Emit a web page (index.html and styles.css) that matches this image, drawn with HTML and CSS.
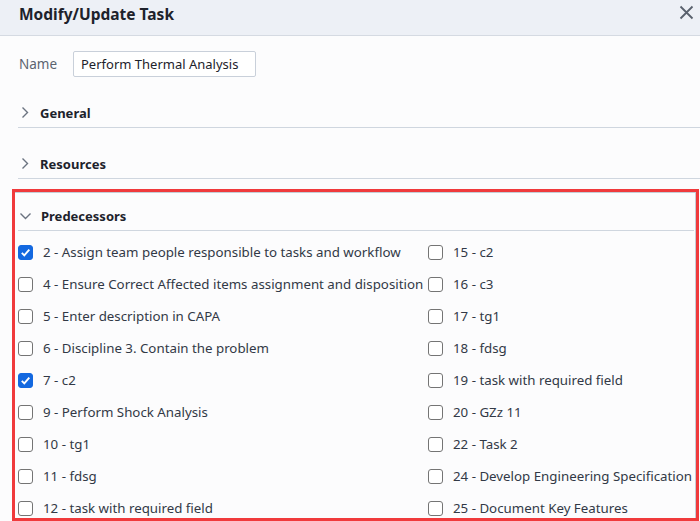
FILE: index.html
```html
<!DOCTYPE html>
<html lang="en">

<head>
    <meta charset="UTF-8">
    <meta name="viewport" content="width=device-width, initial-scale=1.0">
    <title>Modify/Update Task</title>
    <link rel="stylesheet" href="styles.css">
</head>

<body>
    <div class="dialog">
        <div class="dialog-header">
            <h2>Modify/Update Task</h2>
            <button type="button" class="btn-close" aria-label="Close">
                <svg width="15" height="15" viewBox="0 0 15 15">
                    <path d="M1.5 1.5 L13.5 13.5 M13.5 1.5 L1.5 13.5" stroke="#59616d" stroke-width="1.8" fill="none" />
                </svg>
            </button>
        </div>

        <div class="dialog-body">
            <div class="name-row">
                <label for="taskName">Name</label>
                <input type="text" id="taskName" value="Perform Thermal Analysis">
            </div>

            <!-- Collapsed sections -->
            <div class="section">
                <div class="section-head">
                    <svg class="chevron" width="10" height="13" viewBox="0 0 10 13">
                        <path d="M2.5 1.5 L7.5 6.5 L2.5 11.5" stroke="#6b7380" stroke-width="1.4" fill="none" />
                    </svg>
                    <span>General</span>
                </div>
            </div>

            <div class="section">
                <div class="section-head">
                    <svg class="chevron" width="10" height="13" viewBox="0 0 10 13">
                        <path d="M2.5 1.5 L7.5 6.5 L2.5 11.5" stroke="#6b7380" stroke-width="1.4" fill="none" />
                    </svg>
                    <span>Resources</span>
                </div>
            </div>

            <!-- Expanded predecessors section -->
            <div class="highlight">
                <div class="section-head open">
                    <svg class="chevron" width="13" height="10" viewBox="0 0 13 10">
                        <path d="M1.5 2.5 L6.5 7.5 L11.5 2.5" stroke="#6b7380" stroke-width="1.4" fill="none" />
                    </svg>
                    <span>Predecessors</span>
                </div>
                <div class="pred-grid" id="predList"></div>
            </div>
        </div>
    </div>

    <script>
        const leftTasks = [
            [2, "Assign team people responsible to tasks and workflow", true],
            [4, "Ensure Correct Affected items assignment and disposition", false],
            [5, "Enter description in CAPA", false],
            [6, "Discipline 3. Contain the problem", false],
            [7, "c2", true],
            [9, "Perform Shock Analysis", false],
            [10, "tg1", false],
            [11, "fdsg", false],
            [12, "task with required field", false]
        ];
        const rightTasks = [
            [15, "c2"], [16, "c3"], [17, "tg1"], [18, "fdsg"],
            [19, "task with required field"], [20, "GZz 11"], [22, "Task 2"],
            [24, "Develop Engineering Specification"], [25, "Document Key Features"]
        ];

        const tick = `<svg width="11" height="11" viewBox="0 0 11 11"><path d="M1.8 5.8 L4.3 8.3 L9.3 2.6" stroke="#fff" stroke-width="1.9" fill="none" /></svg>`;

        function item(num, text, checked) {
            return `
            <label class="pred-item">
                <input type="checkbox" ${checked ? "checked" : ""}>
                <span class="box">${tick}</span>
                <span>${num} - ${text}</span>
            </label>`;
        }

        // Build the two columns row by row
        let rows = "";
        for (let i = 0; i < leftTasks.length; i++) {
            rows += item(leftTasks[i][0], leftTasks[i][1], leftTasks[i][2]);
            rows += item(rightTasks[i][0], rightTasks[i][1], false);
        }
        document.getElementById("predList").innerHTML = rows;
    </script>
</body>

</html>
```

FILE: styles.css
```css
body {
    margin: 0;
    padding: 0;
    font-family: "Noto Sans", "Open Sans", Arial, sans-serif;
    background-color: #fcfcfd;
    color: #2f3540;
    overflow: hidden;
}

.dialog {
    width: 700px;
    height: 521px;
    overflow: hidden;
}

.dialog-header {
    height: 35px;
    background-color: #edf0f6;
    border-bottom: 1px solid #d5dae2;
    display: flex;
    align-items: center;
    justify-content: space-between;
    padding: 0 4px 0 19px;
}

.dialog-header h2 {
    margin: 0;
    font-size: 15.5px;
    font-weight: 700;
    color: #1d222b;
    margin-top: -8px;
}

.btn-close {
    border: none;
    background: none;
    padding: 0;
    width: 20px;
    height: 20px;
    margin-top: -7px;
    cursor: pointer;
}

.dialog-body {
    padding: 15px 0 0 18px;
}

.name-row {
    display: flex;
    align-items: center;
    height: 26px;
    padding-left: 1px;
}

.name-row label {
    font-size: 13.5px;
    color: #5b6370;
    width: 54px;
}

.name-row input {
    width: 183px;
    height: 26px;
    box-sizing: border-box;
    border: 1px solid #c9d0da;
    border-radius: 2px;
    padding: 0 7px;
    font-family: inherit;
    font-size: 13px;
    color: #1d222b;
    background: #fff;
}

.section {
    margin-top: 21px;
}

.section-head {
    height: 29px;
    display: flex;
    align-items: center;
    border-bottom: 1.5px solid #cfd6df;
    font-size: 13px;
    font-weight: 700;
    color: #1d222b;
}

.section-head .chevron {
    margin: 0 10px 0 2px;
}

.section-head.open .chevron {
    margin: 0 9px 0 1px;
}

/* red annotation frame round the expanded section */
.highlight {
    margin: 10px 1px 0 -6px;
    height: 332px;
    box-sizing: border-box;
    border: 3px solid #f03a3c;
    box-shadow: inset -1px 1px 0 #c5ced6;
    padding: 9px 2px 0 3px;
    overflow: hidden;
}

.pred-grid {
    display: grid;
    grid-template-columns: 410px 1fr;
    margin-top: 5px;
}

.pred-item {
    display: flex;
    align-items: center;
    height: 32px;
    font-size: 13.3px;
    color: #323946;
    white-space: nowrap;
}

.pred-item input {
    display: none;
}

.box {
    width: 15px;
    height: 15px;
    box-sizing: border-box;
    border: 1.5px solid #747474;
    border-radius: 3px;
    background: #fff;
    margin-right: 10px;
    display: flex;
    align-items: center;
    justify-content: center;
}

.box svg {
    display: none;
}

.pred-item input:checked + .box {
    background: #1368e0;
    border-color: #1368e0;
}

.pred-item input:checked + .box svg {
    display: block;
}
```
